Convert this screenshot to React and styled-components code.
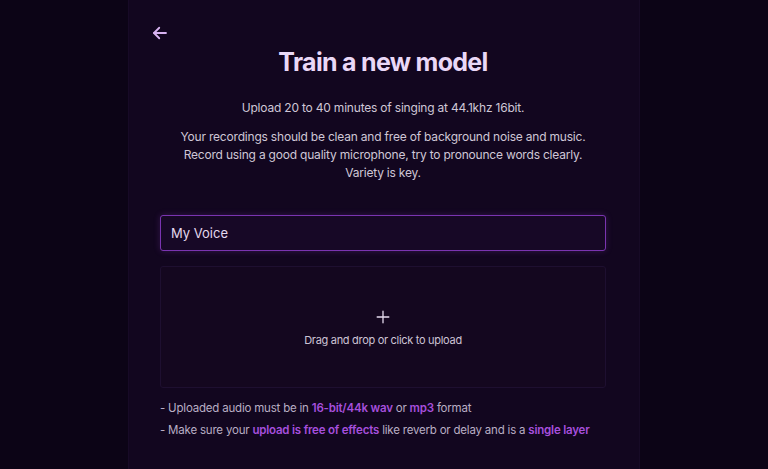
import styled, { createGlobalStyle } from "styled-components";

const GlobalStyle = createGlobalStyle`
  html, body {
    margin: 0;
    padding: 0;
    background: #0c0416;
  }
  body {
    font-family: "Inter", "Noto Sans", sans-serif;
    -webkit-font-smoothing: antialiased;
  }
`;

const accent = "#a64fdc";

const Page = styled.div`
  display: flex;
  justify-content: center;
  min-height: 469px;
  background: #0c0416;
`;

const Panel = styled.main`
  display: flex;
  flex-direction: column;
  width: 512px;
  min-height: 469px;
  box-sizing: border-box;
  padding: 23px 33px 0 31px;
  background: #12061f;
  border-left: 1px solid #170a26;
  border-right: 1px solid #170a26;
`;

const BackButton = styled.button`
  display: inline-flex;
  align-items: center;
  justify-content: center;
  width: 20px;
  height: 20px;
  margin-left: -10px;
  padding: 0;
  border: none;
  background: transparent;
  color: #d7b2f0;
  cursor: pointer;
  align-self: flex-start;
`;

const Header = styled.header`
  display: flex;
  flex-direction: column;
  align-items: center;
  text-align: center;
  color: #cfc6d6;

  h1 {
    margin: 3px 0 0;
    color: #ead8f7;
    font-size: 25px;
    font-weight: 700;
    letter-spacing: -0.7px;
    line-height: 32px;
  }

  p {
    margin: 0;
    font-size: 12px;
    line-height: 18px;
    letter-spacing: -0.2px;
  }

  .lead {
    margin-top: 21px;
  }

  .details {
    margin-top: 11px;
    line-height: 18px;
  }
`;

const NameInput = styled.input`
  margin-top: 33px;
  height: 36px;
  box-sizing: border-box;
  padding: 0 10px;
  border: 1px solid #7a34b0;
  border-radius: 3px;
  background: #170826;
  box-shadow: 0 0 6px rgba(150, 70, 210, 0.25);
  color: #e4d8ee;
  font-family: "Inter", sans-serif;
  font-size: 13px;
  outline: none;
  caret-color: #e4d8ee;
`;

const DropZone = styled.div`
  display: flex;
  flex-direction: column;
  align-items: center;
  justify-content: center;
  gap: 9px;
  margin-top: 15px;
  height: 122px;
  box-sizing: border-box;
  padding-top: 2px;
  border: 1px solid #1e0f30;
  border-radius: 3px;
  background: #14071f;
  color: #cdc3d5;
  cursor: pointer;

  span {
    font-size: 11px;
    letter-spacing: -0.3px;
  }
`;

const Notes = styled.ul`
  margin: 12px 0 0;
  padding: 0;
  list-style: none;
  display: flex;
  flex-direction: column;
  gap: 6px;
  color: #b9aec4;
  font-size: 11.5px;
  letter-spacing: -0.2px;
  line-height: 16px;

  b {
    color: ${accent};
    font-weight: 600;
  }
`;

function ArrowLeft() {
  return (
    <svg width="18" height="18" viewBox="0 0 24 24" fill="none" stroke="currentColor" strokeWidth="2.4" strokeLinecap="round" strokeLinejoin="round">
      <path d="M20 12H4" />
      <path d="M11 5l-7 7 7 7" />
    </svg>
  );
}

function Plus() {
  return (
    <svg width="14" height="14" viewBox="0 0 24 24" fill="none" stroke="#e6dcef" strokeWidth="2.2" strokeLinecap="round">
      <path d="M12 2v20M2 12h20" />
    </svg>
  );
}

export default function App() {
  return (
    <>
      <GlobalStyle />
      <Page>
        <Panel>
          <BackButton type="button" aria-label="Back">
            <ArrowLeft />
          </BackButton>

          <Header>
            <h1>Train a new model</h1>
            <p className="lead">Upload 20 to 40 minutes of singing at 44.1khz 16bit.</p>
            <p className="details">
              Your recordings should be clean and free of background noise and music.
              <br />
              Record using a good quality microphone, try to pronounce words clearly.
              <br />
              Variety is key.
            </p>
          </Header>

          <NameInput type="text" defaultValue="My Voice" autoFocus />

          <DropZone>
            <Plus />
            <span>Drag and drop or click to upload</span>
          </DropZone>

          <Notes>
            <li>
              - Uploaded audio must be in <b>16-bit/44k wav</b> or <b>mp3</b> format
            </li>
            <li>
              - Make sure your <b>upload is free of effects</b> like reverb or delay and is a{" "}
              <b>single layer</b>
            </li>
          </Notes>
        </Panel>
      </Page>
    </>
  );
}
